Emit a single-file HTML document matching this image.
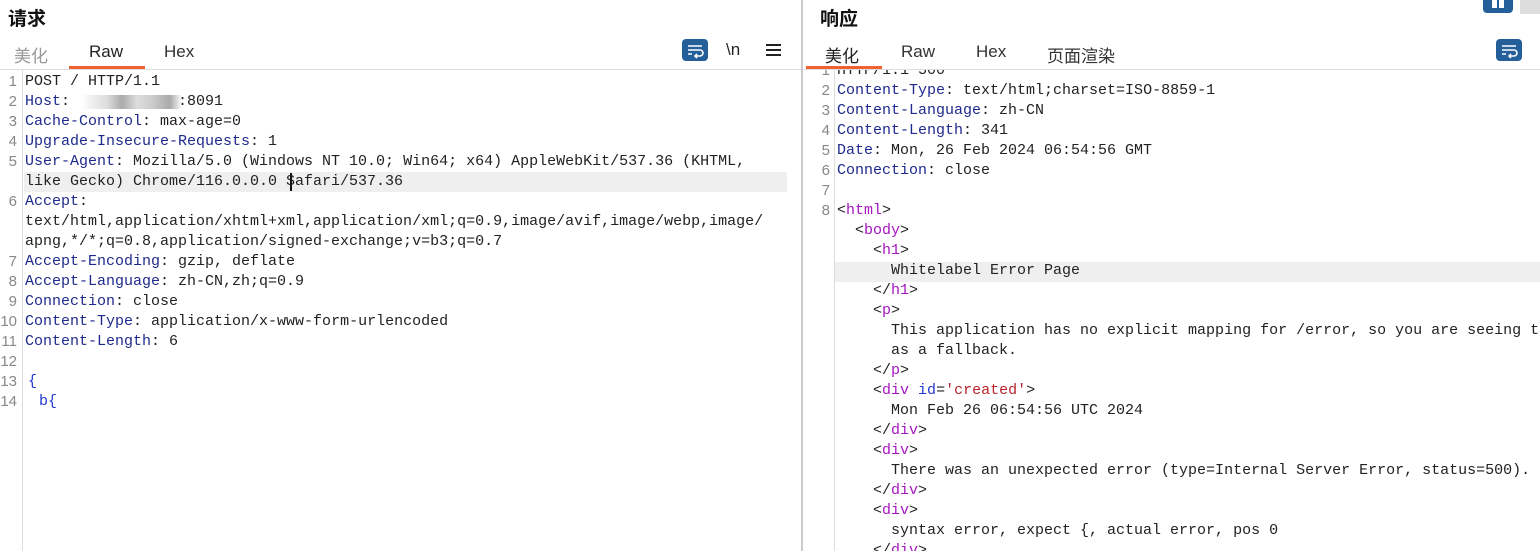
<!DOCTYPE html>
<html><head><meta charset="utf-8"><style>
*{margin:0;padding:0;box-sizing:border-box}
body{width:1540px;height:551px;overflow:hidden;background:#fff;position:relative;font-family:"Liberation Sans","Noto Sans CJK SC",sans-serif}
.ttl{position:absolute;top:4px;font-size:19px;font-weight:bold;color:#111}
.tab{position:absolute;top:42px;font-size:17px;color:#333}
.ul{position:absolute;height:3px;background:#f2622e;top:66px}
.hr{position:absolute;top:69px;height:1px;background:#ddd}
.code{position:absolute;font-family:"Liberation Mono",monospace;font-size:15px;line-height:20px;white-space:pre;color:#222;letter-spacing:0}
.ln{position:absolute;font-family:"Liberation Sans",sans-serif;font-size:15px;color:#888;line-height:20px;text-align:right;width:16px}
.k{color:#1e2a8c}.t{color:#a515c0}.a{color:#2038d0}.v{color:#b8232b}.b{color:#2038d0}
.icon{position:absolute;width:26px;height:22px;background:#245f99;border-radius:4px}
</style></head><body>
<div class="ttl" style="left:8px">请求</div>
<div class="tab" style="left:14px;color:#999">美化</div>
<div class="tab" style="left:89px;color:#222">Raw</div>
<div class="tab" style="left:164px">Hex</div>
<div class="ul" style="left:69px;width:76px"></div>
<div class="hr" style="left:0;width:802px"></div>
<div class="icon" style="left:682px;top:39px"><svg width="26" height="22"><path d="M6 7h14M6 11h12a3 3 0 0 1 0 6h-4M6 15h4M15 15l-2 2 2 2" stroke="#fff" stroke-width="1.6" fill="none"/></svg></div>
<div style="position:absolute;left:726px;top:40px;font-size:17px;color:#222">\n</div>
<div style="position:absolute;left:766px;top:44px;width:15px;height:2px;background:#222;box-shadow:0 5px 0 #222,0 10px 0 #222"></div>
<div style="position:absolute;left:801px;top:0;width:2px;height:551px;background:#ccc"></div>
<div style="position:absolute;left:22px;top:70px;width:1px;height:481px;background:#ddd"></div>
<div style="position:absolute;left:24px;top:172px;width:763px;height:20px;background:#efefef"></div>
<div style="position:absolute;left:290px;top:173px;width:2px;height:18px;background:#111"></div>
<div style="position:absolute;left:82px;top:95px;width:100px;height:14px;background:linear-gradient(90deg,#fff 0,#eee 10%,#ddd 25%,#aaa 40%,#ddd 55%,#ccc 70%,#aaa 88%,#fff 100%)"></div>
<div class="ln" style="left:1px;top:72px;line-height:20px">1<br>2<br>3<br>4<br>5<br><br>6<br><br><br>7<br>8<br>9<br></div>
<div class="ln" style="left:-1px;top:312px;width:18px">10<br>11<br>12<br>13<br>14</div>
<div class="code" style="left:25px;top:72px">POST / HTTP/1.1
<span class="k">Host</span>:            :8091
<span class="k">Cache-Control</span>: max-age=0
<span class="k">Upgrade-Insecure-Requests</span>: 1
<span class="k">User-Agent</span>: Mozilla/5.0 (Windows NT 10.0; Win64; x64) AppleWebKit/537.36 (KHTML,
like Gecko) Chrome/116.0.0.0 Safari/537.36
<span class="k">Accept</span>:
text/html,application/xhtml+xml,application/xml;q=0.9,image/avif,image/webp,image/
apng,*/*;q=0.8,application/signed-exchange;v=b3;q=0.7
<span class="k">Accept-Encoding</span>: gzip, deflate
<span class="k">Accept-Language</span>: zh-CN,zh;q=0.9
<span class="k">Connection</span>: close
<span class="k">Content-Type</span>: application/x-www-form-urlencoded
<span class="k">Content-Length</span>: 6
</div>
<div class="code b" style="left:28px;top:372px">{</div>
<div class="code b" style="left:39px;top:392px">b{</div>

<div class="ttl" style="left:820px">响应</div>
<div class="tab" style="left:825px;color:#222">美化</div>
<div class="tab" style="left:901px">Raw</div>
<div class="tab" style="left:976px">Hex</div>
<div class="tab" style="left:1047px">页面渲染</div>
<div class="hr" style="left:803px;width:737px"></div>
<div class="icon" style="left:1496px;top:39px"><svg width="26" height="22"><path d="M6 7h14M6 11h12a3 3 0 0 1 0 6h-4M6 15h4M15 15l-2 2 2 2" stroke="#fff" stroke-width="1.6" fill="none"/></svg></div>
<div style="position:absolute;left:1483px;top:-4px;width:30px;height:17px;background:#245f99;border-radius:4px"><div style="position:absolute;left:9px;top:4px;width:5px;height:8px;background:#fff"></div><div style="position:absolute;left:16px;top:4px;width:5px;height:8px;background:#fff"></div></div>
<div style="position:absolute;left:1520px;top:0;width:20px;height:14px;background:#ddd"></div>
<div style="position:absolute;left:834px;top:70px;width:1px;height:481px;background:#ddd"></div>
<div style="position:absolute;left:835px;top:262px;width:705px;height:20px;background:#efefef"></div>
<div style="position:absolute;left:806px;top:70px;width:734px;height:481px;overflow:hidden">
<div class="ln" style="left:8px;top:-9px">1<br>2<br>3<br>4<br>5<br>6<br>7<br>8</div>
<div class="code" style="left:31px;top:-9px">HTTP/1.1 500
<span class="k">Content-Type</span>: text/html;charset=ISO-8859-1
<span class="k">Content-Language</span>: zh-CN
<span class="k">Content-Length</span>: 341
<span class="k">Date</span>: Mon, 26 Feb 2024 06:54:56 GMT
<span class="k">Connection</span>: close

&lt;<span class="t">html</span>&gt;
  &lt;<span class="t">body</span>&gt;
    &lt;<span class="t">h1</span>&gt;
      Whitelabel Error Page
    &lt;/<span class="t">h1</span>&gt;
    &lt;<span class="t">p</span>&gt;
      This application has no explicit mapping for /error, so you are seeing this
      as a fallback.
    &lt;/<span class="t">p</span>&gt;
    &lt;<span class="t">div</span> <span class="a">id</span>=<span class="v">'created'</span>&gt;
      Mon Feb 26 06:54:56 UTC 2024
    &lt;/<span class="t">div</span>&gt;
    &lt;<span class="t">div</span>&gt;
      There was an unexpected error (type=Internal Server Error, status=500).
    &lt;/<span class="t">div</span>&gt;
    &lt;<span class="t">div</span>&gt;
      syntax error, expect {, actual error, pos 0
    &lt;/<span class="t">div</span>&gt;</div>
</div>
<div class="ul" style="left:806px;width:76px"></div>
</body></html>
